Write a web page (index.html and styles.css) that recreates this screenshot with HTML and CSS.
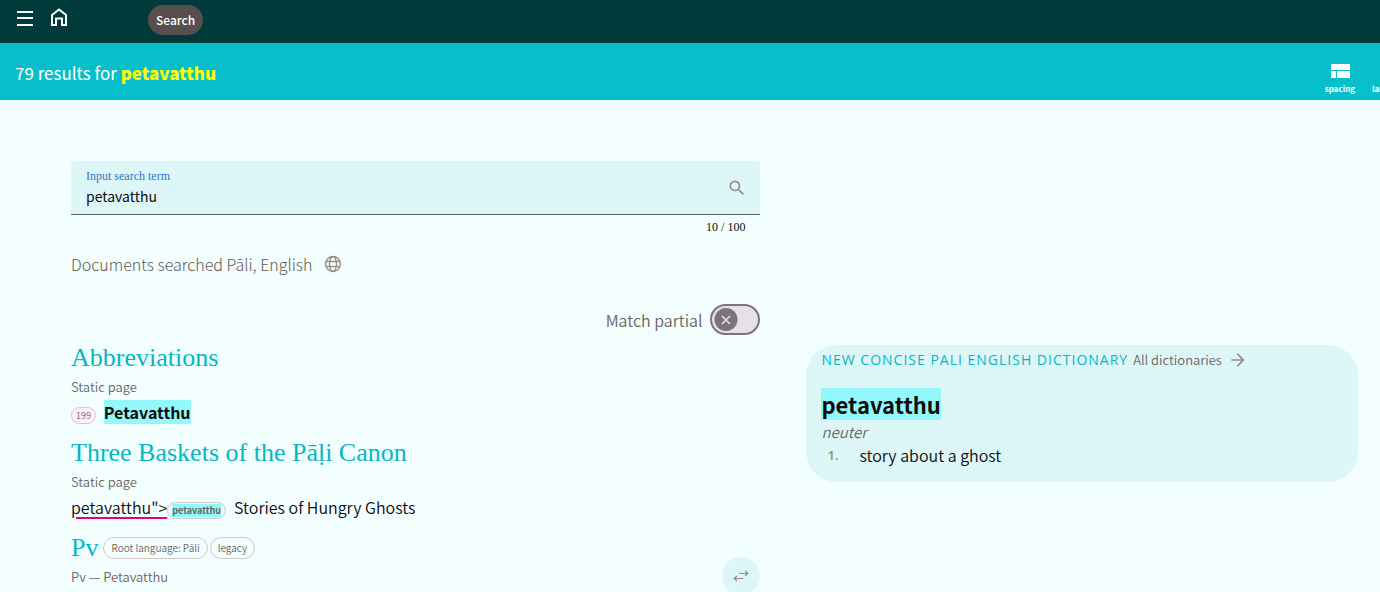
FILE: index.html
```html
<!DOCTYPE html>
<html lang="en">
<head>
    <meta charset="UTF-8">
    <meta name="viewport" content="width=device-width, initial-scale=1.0">
    <title>Search: petavatthu</title>
    <link rel="stylesheet" href="styles.css">
</head>
<body>

<header class="top-bar">
    <button class="icon-btn" aria-label="Menu">
        <svg width="24" height="24" viewBox="0 0 24 24" fill="currentColor"><path d="M4 6h16v2H4zM4 12h16v2H4zM4 19h16v2H4z"/></svg>
    </button>
    <a class="icon-btn" href="#" aria-label="Home">
        <svg width="24" height="24" viewBox="0 0 24 24" fill="none" stroke="currentColor" stroke-width="2"><path d="M5 10l7-5.500 7 5.500v10h-4v-6.500H9V20H5z"/></svg>
    </a>
    <a class="crumb" href="#">Search</a>
</header>

<div class="toolbar">
    <h1 class="toolbar-title">79 results for <b>petavatthu</b></h1>
    <div class="toolbar-actions">
        <button class="tool-btn">
            <svg width="24" height="24" viewBox="0 0 24 24" fill="currentColor"><path d="M3 5h19v6H3zM3 12h5v7H3zM9 12h13v7H9z"/></svg>
            spacing
        </button>
        <button class="tool-btn">
            <svg width="24" height="24" viewBox="0 0 24 24"></svg>
            language
        </button>
    </div>
</div>

<main class="layout">
    <form class="search-form">
        <div class="field">
            <div class="field-text">
                <label for="term">Input search term</label>
                <input type="text" id="term" value="petavatthu" maxlength="100">
            </div>
            <button type="button" class="field-icon" aria-label="Search">
                <svg width="20" height="20" viewBox="0 0 24 24" fill="currentColor"><path d="M15.500 14h-.79l-.28-.27A6.470 6.470 0 0 0 16 9.500 6.500 6.500 0 1 0 9.500 16c1.610 0 3.090-.59 4.230-1.570l.27.28v.79l5 4.990L20.490 19zm-6 0C7.010 14 5 11.990 5 9.500S7.010 5 9.500 5 14 7.010 14 9.500 11.990 14 9.500 14z"/></svg>
            </button>
        </div>
        <div class="char-count">10 / 100</div>

        <p class="searched">
            Documents searched Pāli, English
            <svg width="20" height="20" viewBox="0 0 24 24" fill="none" stroke="currentColor" stroke-width="1.6"><circle cx="12" cy="12" r="9"/><ellipse cx="12" cy="12" rx="4.200" ry="9"/><path d="M3.600 9h16.800M3.600 15h16.800"/></svg>
        </p>

        <div class="match">
            <label for="partial">Match partial</label>
            <span class="switch">
                <input type="checkbox" role="switch" id="partial">
                <svg width="12" height="12" viewBox="0 0 12 12" stroke="currentColor" stroke-width="1.500"><path d="M2 2l8 8M10 2l-8 8"/></svg>
            </span>
        </div>
    </form>

    <section class="results">
        <article class="result">
            <h2><a href="#">Abbreviations</a></h2>
            <p class="kind">Static page</p>
            <p class="snippet"><span class="ref">199</span><mark>Petavatthu</mark></p>
        </article>
        <article class="result">
            <h2><a href="#">Three Baskets of the Pāḷi Canon</a></h2>
            <p class="kind">Static page</p>
            <p class="snippet"><a href="#">petavatthu"&gt;</a><span class="ref"><mark>petavatthu</mark></span>Stories of Hungry Ghosts</p>
        </article>
        <article class="result">
            <div class="parallels">
                <div>
                    <h2><a href="#">Pv</a><span class="tag">Root language: Pāli</span><span class="tag">legacy</span></h2>
                    <p class="kind">Pv — Petavatthu</p>
                </div>
                <button class="swap" aria-label="Parallels">
                    <svg width="16" height="16" viewBox="0 0 16 16" fill="none" stroke="currentColor" stroke-width="1.200"><path d="M6 5.500h8.500M12 3l2.800 2.500L12 8M10 10.500H1.500M4 8l-2.800 2.500L4 13"/></svg>
                </button>
            </div>
            <div class="excerpt"></div>
        </article>
    </section>

    <aside class="dictionary">
        <header class="dict-head">
            <h3>New Concise Pali English Dictionary</h3>
            <a href="#">All dictionaries
                <svg width="20" height="20" viewBox="0 0 24 24" fill="currentColor"><path d="m12 4-1.410 1.410L16.170 11H4v2h12.170l-5.580 5.590L12 20l8-8z"/></svg>
            </a>
        </header>
        <dl>
            <dt><mark>petavatthu</mark></dt>
            <dd class="grammar">neuter</dd>
            <dd>
                <ol>
                    <li>story about a ghost</li>
                </ol>
            </dd>
        </dl>
    </aside>
</main>

</body>
</html>
```
FILE: styles.css
```css
* {
    box-sizing: border-box;
}

body {
    margin: 0;
    background: #f3ffff;
    color: #0e0c0b;
    font-family: "Noto Sans CJK SC", "Noto Sans", sans-serif;
    font-size: 16px;
    font-weight: 350;
    overflow-x: hidden;
}

h1, h2, h3, p, dl, dd, ol {
    margin: 0;
    padding: 0;
    font-weight: inherit;
}

a {
    color: inherit;
    text-decoration: none;
}

button {
    border: none;
    padding: 0;
    background: none;
    color: inherit;
    font-family: inherit;
    cursor: pointer;
}

svg {
    display: block;
    flex: none;
}

mark {
    background: #92f8fb;
    color: inherit;
    font-weight: 700;
}

/* header */
.top-bar {
    display: flex;
    align-items: flex-start;
    gap: 10px;
    height: 43px;
    padding: 5px 13px;
    background: #003a3b;
    color: #fff;
}

.crumb {
    margin-left: 67px;
    padding: 0 8px;
    border-radius: 15px;
    background: #564f4e;
    font-size: 12px;
    font-weight: 500;
    line-height: 30px;
}

.toolbar {
    display: flex;
    justify-content: space-between;
    height: 57px;
    padding: 16px 0 0 15px;
    background: #06bfca;
    color: #fff;
    overflow: hidden;
}

.toolbar-title {
    font-size: 17px;
    font-weight: 400;
    line-height: 28px;
}

.toolbar-title b {
    color: #ff0;
    font-weight: 900;
}

.toolbar-actions {
    display: flex;
    gap: 10px;
    margin-right: -30px;
}

.tool-btn {
    display: flex;
    flex-direction: column;
    align-items: center;
    width: 40px;
    font-size: 8px;
    font-weight: 700;
    line-height: 12px;
}

/* page */
.layout {
    display: grid;
    grid-template-columns: 5fr 4fr;
    column-gap: 46px;
    align-items: start;
    padding: 61px 22px 0 71px;
}

.search-form {
    grid-column: 1;
}

.field {
    display: flex;
    justify-content: space-between;
    align-items: center;
    height: 54px;
    padding: 0 13px 0 15px;
    border-bottom: 1px solid #5f6470;
    border-radius: 4px 4px 0 0;
    background: #ddf7f9;
}

.field-text {
    flex: 1;
}

.field label {
    display: block;
    color: #2b78c5;
    font-family: "Liberation Serif", serif;
    font-size: 12px;
    line-height: 14px;
}

.field input {
    width: 100%;
    height: 20px;
    padding: 0;
    border: none;
    outline: none;
    background: none;
    color: inherit;
    font-family: inherit;
    font-size: 14px;
}

.field-icon {
    color: #978e85;
}

.char-count {
    padding-right: 15px;
    font-family: "Liberation Serif", serif;
    font-size: 12px;
    line-height: 24px;
    text-align: right;
}

.searched {
    display: flex;
    align-items: center;
    gap: 10px;
    margin-top: 13px;
    color: #5f5955;
    font-weight: 300;
    line-height: 24px;
}

.searched svg {
    color: #978e85;
}

.match {
    display: flex;
    justify-content: flex-end;
    align-items: center;
    gap: 8px;
    margin-top: 28px;
    color: #6b6561;
}

.switch {
    display: grid;
    align-items: center;
    color: #e6e0e9;
}

.switch input,
.switch svg {
    grid-area: 1 / 1;
}

.switch svg {
    margin-left: 10px;
    pointer-events: none;
}

.switch input {
    appearance: none;
    width: 50px;
    height: 31px;
    margin: 0;
    border: 2px solid #79747e;
    border-radius: 16px;
    background: radial-gradient(circle at 14px 50%, #79747e 11px, #e6e0e9 12px);
}

/* results */
.results {
    grid-column: 1;
    margin-top: 4px;
}

.result {
    margin-bottom: 7px;
}

.result h2 {
    display: flex;
    align-items: center;
    color: #06b6c4;
    font-family: "Liberation Serif", serif;
    font-size: 26px;
    line-height: 38px;
}

.kind {
    color: #6b6561;
    font-size: 13px;
    line-height: 20px;
}

.snippet {
    padding: 2px 0;
    line-height: 26px;
}

.snippet a {
    text-decoration: underline 2px #e6007e;
    text-underline-offset: 3px;
}

.ref {
    display: inline-block;
    margin-right: 8px;
    padding: 0 4px;
    border: 1px solid #d0c8c4;
    border-radius: 9px;
    background: #fdf0fa;
    color: #6b6561;
    font-size: 9px;
    line-height: 15px;
}

.parallels {
    display: flex;
    justify-content: space-between;
    align-items: flex-end;
}

.tag {
    margin-left: 2px;
    padding: 0 7px;
    border: 1px solid #d0c8c4;
    border-radius: 11px;
    color: #6b6561;
    font-family: "Noto Sans CJK SC", "Noto Sans", sans-serif;
    font-size: 10px;
    line-height: 20px;
}

a + .tag {
    margin-left: 5px;
}

.swap {
    display: grid;
    place-items: center;
    width: 38px;
    height: 38px;
    margin-bottom: -8px;
    border-radius: 50%;
    background: #ddf7f9;
    color: #978e85;
}

.excerpt {
    width: 184px;
    height: 24px;
    margin-top: 4px;
    border-radius: 8px;
    background: #e9fbfc;
}

/* dictionary */
.dictionary {
    grid-column: 2;
    grid-row: 2;
    margin-top: 10px;
    padding: 5px 15px 14px;
    border-radius: 30px;
    background: #ddf7f9;
}

.dict-head {
    display: flex;
    align-items: center;
    gap: 5px;
    color: #6b6561;
    font-size: 13px;
    line-height: 20px;
}

.dict-head h3 {
    color: #06b6c4;
    font-family: "Open Sans", sans-serif;
    font-size: 14px;
    font-weight: 400;
    letter-spacing: 1px;
    text-transform: uppercase;
}

.dict-head a {
    display: flex;
    align-items: center;
    gap: 6px;
}

.dict-head svg {
    color: #978e85;
}

.dictionary dt {
    margin-top: 16px;
    font-size: 22px;
    line-height: 36px;
}

.dictionary .grammar {
    color: #6b6561;
    font-size: 15px;
    font-style: italic;
    line-height: 20px;
}

.dictionary ol {
    list-style: none;
    counter-reset: sense;
    line-height: 26px;
}

.dictionary li {
    display: grid;
    grid-template-columns: 32px 1fr;
    padding-left: 6px;
    counter-increment: sense;
}

.dictionary li::before {
    content: counter(sense) ".";
    color: #978e85;
    font-family: "Noto Sans", sans-serif;
    font-size: 13px;
    font-weight: 600;
}
```
